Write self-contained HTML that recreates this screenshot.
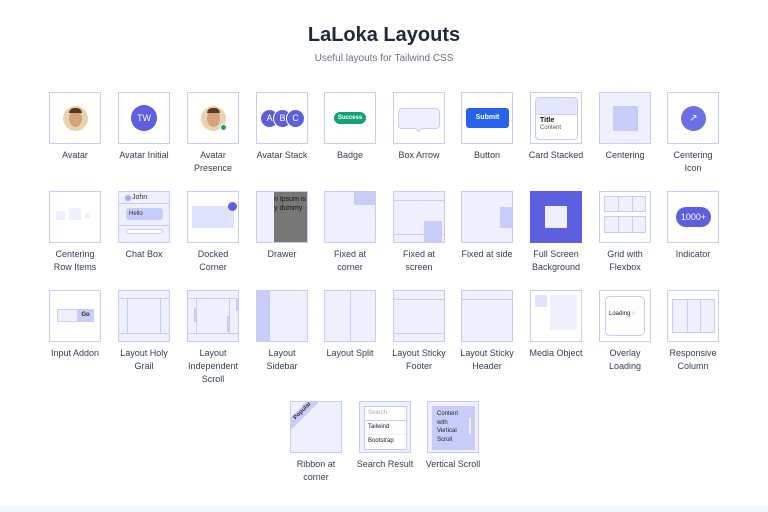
<!DOCTYPE html>
<html><head><meta charset="utf-8"><style>
*{box-sizing:border-box;margin:0;padding:0}
body{width:768px;height:512px;background:#fff;font-family:"Liberation Sans",sans-serif;position:relative;overflow:hidden;color:#374151}
h1{position:absolute;top:24px;left:0;width:768px;text-align:center;font-size:20px;font-weight:bold;color:#1f2937}
.sub{position:absolute;top:53px;left:0;width:768px;text-align:center;font-size:10px;color:#6b7280}
.it{position:absolute;width:60px}
.t{position:absolute;left:4px;top:0;width:52px;height:52px;border:1px solid #c7cdf3;background:#fff;overflow:hidden}
.l{position:absolute;top:57px;left:-10px;width:80px;text-align:center;font-size:9px;line-height:13px;color:#374151}
.a{position:absolute}
.bl{background:#eef0fd}
.md{background:#c7cdf8}
.foot{position:absolute;left:0;top:506px;width:768px;height:6px;background:#f1f5fd}
.c{position:absolute;top:16px;width:19px;height:19px;border-radius:50%;background:#5b5fe0;color:#fff;font-size:9px;text-align:center;line-height:17px;border:1px solid #fff}
</style></head><body>
<h1>LaLoka Layouts</h1>
<div class="sub">Useful layouts for Tailwind CSS</div>

<!-- row 1 -->
<div class="it" style="left:45px;top:92px"><div class="t"><div class="a" style="left:13px;top:13px;width:25px;height:25px;border-radius:50%;background:#e8d4b0"><div class="a" style="left:6px;top:4px;width:13px;height:17px;border-radius:50%;background:#d9a27d"></div><div class="a" style="left:6px;top:2px;width:13px;height:5px;border-radius:5px 5px 0 0;background:#5a3a22"></div></div></div><div class="l">Avatar</div></div>
<div class="it" style="left:114px;top:92px"><div class="t"><div class="a" style="left:12px;top:12px;width:26px;height:26px;border-radius:50%;background:#5b5fe0;color:#fff;font-size:9px;text-align:center;line-height:26px">TW</div></div><div class="l">Avatar Initial</div></div>
<div class="it" style="left:183px;top:92px"><div class="t"><div class="a" style="left:13px;top:13px;width:25px;height:25px;border-radius:50%;background:#e8d4b0"><div class="a" style="left:6px;top:4px;width:13px;height:17px;border-radius:50%;background:#d9a27d"></div><div class="a" style="left:6px;top:2px;width:13px;height:5px;border-radius:5px 5px 0 0;background:#5a3a22"></div></div><div class="a" style="left:32px;top:31px;width:7px;height:7px;border-radius:50%;background:#10a36a;border:1px solid #fff"></div></div><div class="l">Avatar<br>Presence</div></div>
<div class="it" style="left:252px;top:92px"><div class="t"><div class="c" style="left:3px">A</div><div class="c" style="left:16px">B</div><div class="c" style="left:29px">C</div></div><div class="l">Avatar Stack</div></div>
<div class="it" style="left:320px;top:92px"><div class="t"><div class="a" style="left:9px;top:19px;width:32px;height:12px;border-radius:6px;background:#10a37a;color:#fff;font-size:6px;font-weight:bold;text-align:center;line-height:12px">Success</div></div><div class="l">Badge</div></div>
<div class="it" style="left:389px;top:92px"><div class="t"><div class="a" style="left:4px;top:15px;width:42px;height:21px;border-radius:4px;background:#eef0fd;border:1px solid #c7cdf3"></div><div class="a" style="left:22px;top:33px;width:5px;height:5px;background:#eef0fd;border-right:1px solid #c7cdf3;border-bottom:1px solid #c7cdf3;transform:rotate(45deg)"></div></div><div class="l">Box Arrow</div></div>
<div class="it" style="left:457px;top:92px"><div class="t"><div class="a" style="left:4px;top:15px;width:43px;height:20px;border-radius:3px;background:#2563eb;color:#fff;font-size:7px;font-weight:bold;text-align:center;line-height:20px">Submit</div></div><div class="l">Button</div></div>
<div class="it" style="left:526px;top:92px"><div class="t"><div class="a" style="left:4px;top:4px;width:43px;height:43px;border-radius:4px;border:1px solid #c7cdf3;overflow:hidden"><div style="height:17px;border-bottom:1px solid #c7cdf3;background:#e3e6fc"></div><div style="font-size:7px;font-weight:bold;color:#111;padding:2px 0 0 4px">Title</div><div style="font-size:6px;color:#555;padding:1px 0 0 4px">Content</div></div></div><div class="l">Card Stacked</div></div>
<div class="it" style="left:595px;top:92px"><div class="t bl"><div class="a md" style="left:13px;top:13px;width:25px;height:25px"></div></div><div class="l">Centering</div></div>
<div class="it" style="left:663px;top:92px"><div class="t"><div class="a" style="left:13px;top:13px;width:25px;height:25px;border-radius:50%;background:#6c70e8;color:#fff;font-size:10px;text-align:center;line-height:25px">↗</div></div><div class="l">Centering<br>Icon</div></div>

<!-- row 2 -->
<div class="it" style="left:45px;top:191px"><div class="t"><div class="a bl" style="left:6px;top:19px;width:9px;height:9px"></div><div class="a bl" style="left:19px;top:16px;width:12px;height:12px"></div><div class="a bl" style="left:35px;top:21px;width:5px;height:5px"></div></div><div class="l">Centering<br>Row Items</div></div>
<div class="it" style="left:114px;top:191px"><div class="t bl"><div class="a" style="left:0;top:0;width:50px;height:12px;border-bottom:1px solid #c7cdf3;font-size:7px;line-height:12px;padding-left:13px;color:#333">John</div><div class="a" style="left:6px;top:3px;width:6px;height:6px;border-radius:50%;background:#a5abf3"></div><div class="a md" style="left:7px;top:16px;width:37px;height:12px;border-radius:3px;font-size:6px;line-height:12px;padding-left:3px;color:#333">Hello</div><div class="a" style="left:0;top:33px;width:50px;border-top:1px solid #c7cdf3"></div><div class="a" style="left:7px;top:37px;width:37px;height:5px;border-radius:3px;background:#fff;border:1px solid #c7cdf3"></div></div><div class="l">Chat Box</div></div>
<div class="it" style="left:183px;top:191px"><div class="t"><div class="a" style="left:4px;top:14px;width:42px;height:22px;background:#dfe3fb"></div><div class="a" style="left:40px;top:10px;width:9px;height:9px;border-radius:50%;background:#5b5fe0"></div></div><div class="l">Docked<br>Corner</div></div>
<div class="it" style="left:252px;top:191px"><div class="t" style="background:#777"><div class="a bl" style="left:0;top:0;width:17px;height:52px"></div><div class="a" style="left:17px;top:3px;font-size:7px;line-height:9px;color:#111;white-space:nowrap">n Ipsum is<br>y dummy</div></div><div class="l">Drawer</div></div>
<div class="it" style="left:320px;top:191px"><div class="t bl"><div class="a md" style="left:29px;top:0;width:21px;height:13px"></div></div><div class="l">Fixed at<br>corner</div></div>
<div class="it" style="left:389px;top:191px"><div class="t bl"><div class="a" style="left:0;top:8px;width:50px;border-top:1px solid #c7cdf3"></div><div class="a" style="left:0;top:42px;width:50px;border-top:1px solid #c7cdf3"></div><div class="a md" style="left:30px;top:29px;width:18px;height:21px"></div></div><div class="l">Fixed at<br>screen</div></div>
<div class="it" style="left:457px;top:191px"><div class="t bl"><div class="a md" style="left:38px;top:15px;width:12px;height:21px"></div></div><div class="l">Fixed at side</div></div>
<div class="it" style="left:526px;top:191px"><div class="t" style="background:#5b5fe0;border-color:#5b5fe0"><div class="a" style="left:14px;top:14px;width:22px;height:22px;background:#eef0fd"></div></div><div class="l">Full Screen<br>Background</div></div>
<div class="it" style="left:595px;top:191px"><div class="t"><div class="a" style="left:4px;top:4px;width:42px;height:16px;border:1px solid #c7cdf3;background:linear-gradient(90deg,#eef0fd 13px,#c7cdf3 13px,#c7cdf3 14px,#eef0fd 14px,#eef0fd 27px,#c7cdf3 27px,#c7cdf3 28px,#eef0fd 28px)"></div><div class="a" style="left:4px;top:24px;width:42px;height:17px;border:1px solid #c7cdf3;background:linear-gradient(90deg,#eef0fd 13px,#c7cdf3 13px,#c7cdf3 14px,#eef0fd 14px,#eef0fd 27px,#c7cdf3 27px,#c7cdf3 28px,#eef0fd 28px)"></div></div><div class="l">Grid with<br>Flexbox</div></div>
<div class="it" style="left:663px;top:191px"><div class="t"><div class="a" style="left:8px;top:15px;width:35px;height:20px;border-radius:10px;background:#5b5fe0;color:#fff;font-size:9px;text-align:center;line-height:20px">1000+</div></div><div class="l">Indicator</div></div>

<!-- row 3 -->
<div class="it" style="left:45px;top:290px"><div class="t"><div class="a bl" style="left:7px;top:18px;width:37px;height:13px;border:1px solid #c7cdf3"></div><div class="a md" style="left:27px;top:18px;width:17px;height:13px;font-size:6px;font-weight:bold;text-align:center;line-height:13px;color:#222">Go</div></div><div class="l">Input Addon</div></div>
<div class="it" style="left:114px;top:290px"><div class="t bl"><div class="a" style="left:0;top:7px;width:50px;border-top:1px solid #c7cdf3"></div><div class="a" style="left:0;top:42px;width:50px;border-top:1px solid #c7cdf3"></div><div class="a" style="left:8px;top:7px;height:35px;border-left:1px solid #c7cdf3"></div><div class="a" style="left:41px;top:7px;height:35px;border-left:1px solid #c7cdf3"></div></div><div class="l">Layout Holy<br>Grail</div></div>
<div class="it" style="left:183px;top:290px"><div class="t bl"><div class="a" style="left:0;top:7px;width:50px;border-top:1px solid #c7cdf3"></div><div class="a" style="left:0;top:42px;width:50px;border-top:1px solid #c7cdf3"></div><div class="a" style="left:8px;top:7px;height:35px;border-left:1px solid #c7cdf3"></div><div class="a" style="left:41px;top:7px;height:35px;border-left:1px solid #c7cdf3"></div><div class="a md" style="left:6px;top:17px;width:2px;height:14px"></div><div class="a md" style="left:39px;top:25px;width:2px;height:16px"></div><div class="a md" style="left:48px;top:8px;width:2px;height:12px"></div></div><div class="l">Layout<br>Independent<br>Scroll</div></div>
<div class="it" style="left:252px;top:290px"><div class="t bl"><div class="a md" style="left:0;top:0;width:13px;height:52px"></div></div><div class="l">Layout<br>Sidebar</div></div>
<div class="it" style="left:320px;top:290px"><div class="t bl"><div class="a" style="left:25px;top:0;height:52px;border-left:1px solid #c7cdf3"></div></div><div class="l">Layout Split</div></div>
<div class="it" style="left:389px;top:290px"><div class="t bl"><div class="a" style="left:0;top:8px;width:50px;border-top:1px solid #c7cdf3"></div><div class="a" style="left:0;top:42px;width:50px;border-top:1px solid #c7cdf3"></div></div><div class="l">Layout Sticky<br>Footer</div></div>
<div class="it" style="left:457px;top:290px"><div class="t bl"><div class="a" style="left:0;top:8px;width:50px;border-top:1px solid #c7cdf3"></div></div><div class="l">Layout Sticky<br>Header</div></div>
<div class="it" style="left:526px;top:290px"><div class="t"><div class="a" style="left:4px;top:4px;width:12px;height:12px;background:#dfe3fb"></div><div class="a bl" style="left:19px;top:4px;width:27px;height:35px"></div></div><div class="l">Media Object</div></div>
<div class="it" style="left:595px;top:290px"><div class="t"><div class="a" style="left:5px;top:5px;width:40px;height:40px;border-radius:5px;border:1px solid #c7cdf3"></div><div class="a" style="left:9px;top:20px;font-size:6px;color:#222">Loading ◌</div></div><div class="l">Overlay<br>Loading</div></div>
<div class="it" style="left:663px;top:290px"><div class="t"><div class="a" style="left:4px;top:8px;width:43px;height:34px;border:1px solid #c7cdf3;background:linear-gradient(90deg,#eef0fd 14px,#c7cdf3 14px,#c7cdf3 15px,#eef0fd 15px,#eef0fd 27px,#c7cdf3 27px,#c7cdf3 28px,#eef0fd 28px)"></div></div><div class="l">Responsive<br>Column</div></div>

<!-- row 4 -->
<div class="it" style="left:286px;top:401px"><div class="t bl"><div class="a md" style="left:-13px;top:5px;width:50px;height:9px;transform:rotate(-45deg);font-size:6px;font-weight:bold;text-align:center;line-height:9px;color:#333">Popular</div></div><div class="l">Ribbon at<br>corner</div></div>
<div class="it" style="left:355px;top:401px"><div class="t bl"><div class="a" style="left:4px;top:4px;width:43px;height:44px;background:#fff;border:1px solid #c7cdf3;font-size:6px;line-height:13px"><div style="padding-left:3px;color:#aaa;border-bottom:1px solid #c7cdf3">Search</div><div style="padding-left:3px;color:#222;border-bottom:1px solid #eef0fd">Tailwind</div><div style="padding-left:3px;color:#222">Bootstrap</div></div></div><div class="l">Search Result</div></div>
<div class="it" style="left:423px;top:401px"><div class="t bl"><div class="a md" style="left:4px;top:4px;width:43px;height:44px;font-size:6px;line-height:8.5px;padding:4px 0 0 5px;color:#222">Content<br>with<br>Vertical<br>Scroll</div><div class="a" style="left:41px;top:16px;width:2px;height:16px;background:#eef0fd"></div></div><div class="l">Vertical Scroll</div></div>

<div class="foot"></div>
</body></html>
